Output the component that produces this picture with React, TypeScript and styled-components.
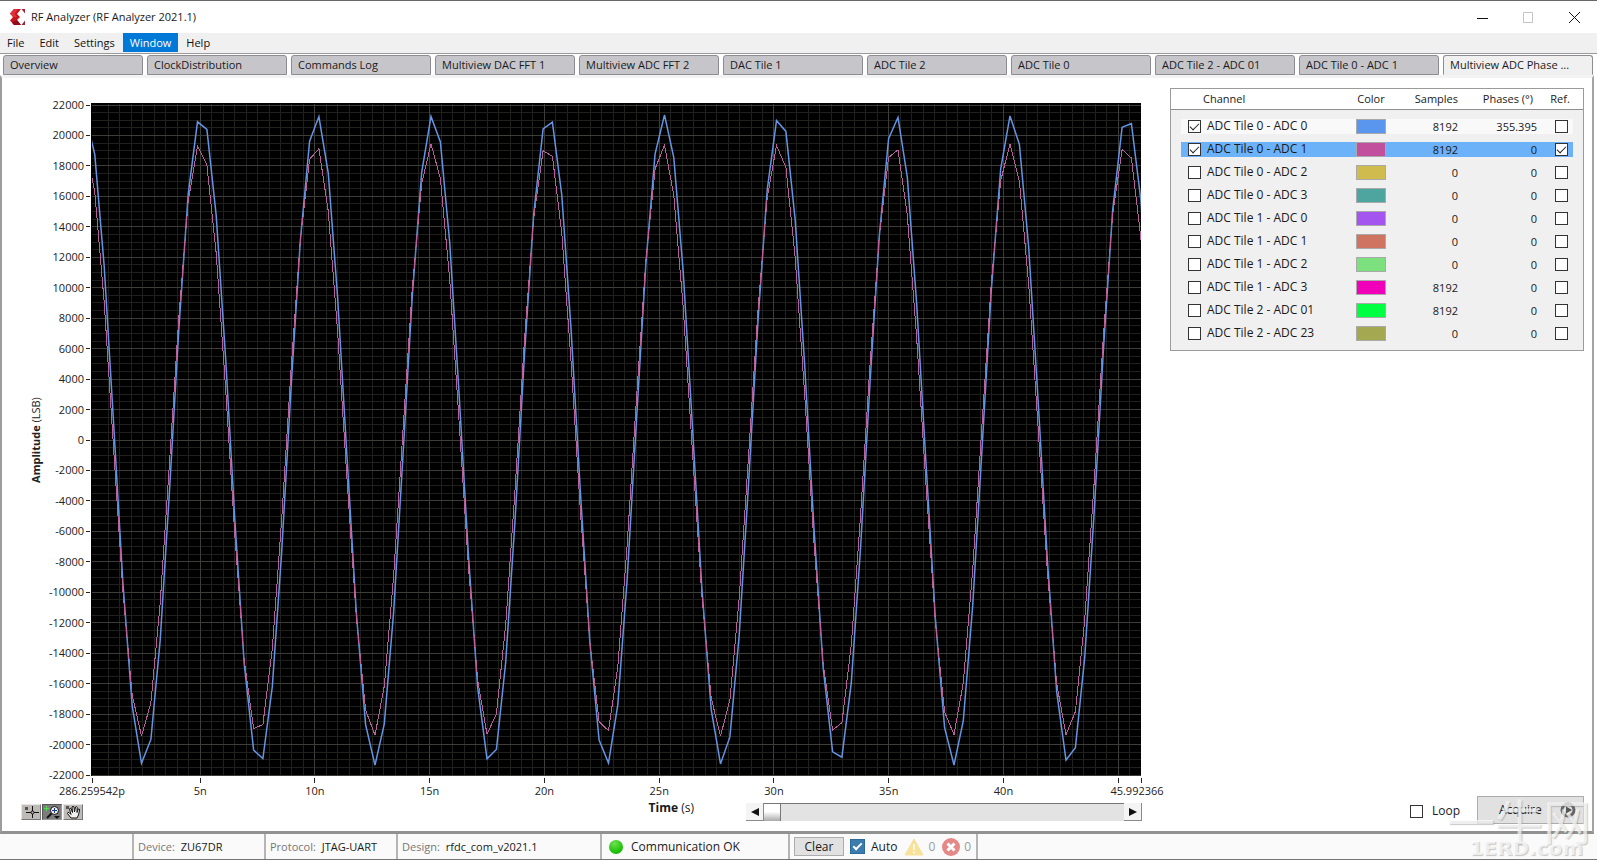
import React, { useLayoutEffect, useRef, useState } from "react";
import styled, { createGlobalStyle } from "styled-components";

const GlobalStyle = createGlobalStyle`
  *, *::before, *::after { box-sizing: border-box; }
  body {
    margin: 0;
    background: #fff;
    color: #1a1a1a;
    font: 11px/16px "Open Sans", "Noto Sans", sans-serif;
  }
  button, input { font: inherit; color: inherit; margin: 0; }
`;

const Frame = styled.div`
  position: relative;
  display: flex;
  flex-direction: column;
  height: 100vh;
  min-height: 560px;
  border-top: 1px solid #6b6769;
  border-bottom: 1px solid #767676;
  overflow: hidden;
`;

/* ---------- title bar ---------- */

const TitleBar = styled.header`
  display: flex;
  align-items: center;
  flex: none;
  height: 32px;
  padding-left: 10px;
`;

const Title = styled.h1`
  flex: 1;
  margin: 0 0 0 6px;
  font-size: 11px;
  font-weight: 400;
`;

const WindowButton = styled.button`
  display: grid;
  place-items: center;
  width: 46px;
  height: 30px;
  padding: 0;
  border: 0;
  background: none;
`;

/* ---------- menu ---------- */

const MenuBar = styled.nav`
  display: flex;
  flex: none;
  gap: 1px;
  height: 21px;
  padding-bottom: 1px;
  background: #f0f0f0;
  border-bottom: 1px solid #9a9a9e;
`;

const MenuItem = styled.button<{ $open?: boolean }>`
  padding: 0 7px;
  border: 0;
  background: ${(p) => (p.$open ? "#0078d7" : "transparent")};
  color: ${(p) => (p.$open ? "#fff" : "#111")};
`;

/* ---------- tabs ---------- */

const TabStrip = styled.div`
  display: grid;
  grid-template-columns: repeat(10, 140fr) 150fr;
  flex: none;
  gap: 4px;
  height: 21px;
  padding: 1px 4px 0 3px;
`;

const Tab = styled.button<{ $active?: boolean }>`
  min-width: 0;
  padding: 0 6px;
  overflow: hidden;
  border: 1px solid #8d8c91;
  border-bottom-color: ${(p) => (p.$active ? "#f0f0f0" : "#8d8c91")};
  border-radius: 3px 3px 0 0;
  background: ${(p) => (p.$active ? "#f0f0f0" : "#c6c5ca")};
  text-align: left;
  white-space: nowrap;
`;

/* ---------- page ---------- */

const Page = styled.main`
  display: flex;
  flex: 1;
  min-height: 0;
  margin-right: 3px;
  border-top: 3px solid #f3f3f3;
  border-left: 2px solid #9c9c9c;
  border-right: 2px solid #a4a4a4;
  border-bottom: 3px solid #8f928f;
`;

const ChartColumn = styled.section`
  display: flex;
  flex: 1;
  flex-direction: column;
  min-width: 0;
`;

const PlotArea = styled.div`
  flex: 1;
  min-height: 0;
  overflow: hidden;

  svg { display: block; }
`;

const ChartFooter = styled.div`
  display: flex;
  align-items: center;
  flex: none;
  height: 30px;
  padding: 0 28px 8px 19px;
`;

const ToolPalette = styled.div`
  display: flex;
  gap: 1px;
  margin-right: auto;
`;

const ToolButton = styled.button<{ $pressed?: boolean }>`
  display: grid;
  place-items: center;
  width: 20px;
  height: 16px;
  padding: 0;
  border: 1px solid;
  border-color: ${(p) => (p.$pressed ? "#555 #999 #999 #555" : "#e6e6e6 #777 #777 #e6e6e6")};
  background: ${(p) => (p.$pressed ? "#7c7c7c" : "#bdbab8")};
`;

const AxisTitle = styled.div`
  margin-right: 52px;
  padding-bottom: 8px;
  font-size: 12px;
`;

const Scroller = styled.div`
  display: flex;
  flex: 0 1 396px;
  height: 18px;
`;

const ScrollArrow = styled.button`
  display: grid;
  place-items: center;
  width: 18px;
  height: 18px;
  padding: 0;
  border: 0;
  border-right: 1px solid #8a8a8a;
  border-bottom: 1px solid #8a8a8a;
  background: #f4f4f4;
`;

const ScrollRange = styled.input`
  appearance: none;
  flex: 1;
  min-width: 0;
  height: 18px;
  border-top: 1px solid #777;
  background: #e3e3e3;

  &::-webkit-slider-thumb {
    appearance: none;
    width: 17px;
    height: 17px;
    border-right: 1px solid #777;
    background: linear-gradient(#fff 45%, #aaa);
  }
`;

const SideColumn = styled.aside`
  display: flex;
  flex: none;
  flex-direction: column;
  justify-content: space-between;
  width: 422px;
  padding: 10px 8px 7px 0;
`;

/* ---------- channel table ---------- */

const TablePanel = styled.div`
  padding-bottom: 5px;
  border: 1px solid #9b9b9b;
  background: #f0f0f0;
`;

const ChannelTable = styled.table`
  width: 100%;
  table-layout: fixed;
  border-collapse: collapse;

  tbody::before {
    content: "";
    display: block;
    height: 5px;
  }
`;

const HeadCell = styled.th<{ $width?: number; $align?: string; $inset?: number }>`
  width: ${(p) => (p.$width ? p.$width + "px" : "auto")};
  height: 20px;
  padding: 0 ${(p) => (p.$align === "right" ? p.$inset ?? 0 : 0)}px 0
    ${(p) => (p.$align === "left" ? p.$inset ?? 0 : 0)}px;
  border-bottom: 1px solid #8f8f8f;
  background: #fff;
  font-weight: 400;
  text-align: ${(p) => p.$align ?? "center"};
`;

const rowTint = { selected: "#6cb2f8", first: "#f9f9f9", plain: "transparent" };

const ChannelRow = styled.tr<{ $tint: keyof typeof rowTint }>`
  height: 23px;
  background: linear-gradient(${(p) => rowTint[p.$tint]}, ${(p) => rowTint[p.$tint]}) center /
    calc(100% - 20px) 15px no-repeat;
`;

const Cell = styled.td<{ $align?: string }>`
  height: 23px;
  padding: 0;
  text-align: ${(p) => p.$align ?? "center"};
`;

const NumberCell = styled(Cell)`
  padding-top: 2px;
  text-align: right;
`;

const ChannelLabel = styled.label`
  display: flex;
  align-items: center;
  gap: 6px;
  padding-left: 17px;
  font-size: 12px;
`;

const Checkbox = styled.input`
  appearance: none;
  display: block;
  flex: none;
  width: 13px;
  height: 13px;
  border: 1px solid #333;
  background: #fff;

  &:checked::after {
    content: "";
    display: block;
    width: 9px;
    height: 5px;
    margin: 2px 0 0 1px;
    border-left: 1px solid #222;
    border-bottom: 1px solid #222;
    transform: rotate(-45deg);
  }
`;

const RefCheckbox = styled(Checkbox)`
  margin: 0 auto 0 18px;
`;

const Swatch = styled.span<{ $color: string }>`
  display: block;
  width: 30px;
  height: 15px;
  margin: 0 auto;
  border: 1px solid #a9a9a9;
  background: ${(p) => p.$color};
`;

/* ---------- acquire ---------- */

const AcquireRow = styled.div`
  display: flex;
  align-items: center;
  justify-content: flex-end;
  gap: 17px;
`;

const LoopLabel = styled.label`
  display: flex;
  align-items: center;
  gap: 9px;
  padding-top: 2px;
  font-size: 12px;
`;

const AcquireButton = styled.button`
  display: flex;
  align-items: center;
  justify-content: space-between;
  width: 107px;
  height: 28px;
  padding: 0 7px 0 21px;
  border: 1px solid #adadad;
  background: #e1e1e1;
  font-size: 12px;
`;

/* ---------- status bar ---------- */

const StatusBar = styled.footer`
  display: flex;
  flex: none;
  height: 25px;
  background: #fafafa;
  font-size: 12px;
`;

const StatusCell = styled.div<{ $width: number }>`
  display: flex;
  align-items: center;
  gap: 6px;
  width: ${(p) => p.$width}px;
  padding-left: 4px;
  border-right: 2px solid #b5b5b5;
  white-space: nowrap;
`;

const StatusField = styled(StatusCell)`
  font-size: 11px;
`;

const FieldName = styled.span`
  color: #777;
`;

const LinkLed = styled.span`
  width: 14px;
  height: 14px;
  margin: 0 2px 0 3px;
  border-radius: 50%;
  background: radial-gradient(circle at 40% 25%, #6fe04e, #22c40e 60%, #17a408);
`;

const ClearButton = styled.button`
  width: 50px;
  height: 19px;
  padding: 0;
  border: 1px solid #adadad;
  background: #e1e1e1;
`;

const AutoLabel = styled.label`
  display: flex;
  align-items: center;
  gap: 6px;
`;

const AutoCheckbox = styled(Checkbox)`
  width: 15px;
  height: 15px;
  border-color: #2d6a98;
  background: #3a7cae;

  &:checked::after {
    margin: 3px 0 0 2px;
    border-width: 0 0 2px 2px;
    border-color: #fff;
  }
`;

const Counter = styled.span`
  display: flex;
  align-items: center;
  gap: 4px;
  padding-left: 1px;
  color: #9a9a9a;
`;

/* ---------- site mark ---------- */

const SiteMark = styled.div`
  position: absolute;
  right: 6px;
  bottom: 0;
  display: flex;
  flex-direction: column;
  align-items: flex-end;
  color: rgba(255, 255, 255, 0.7);
  pointer-events: none;
`;

const SiteName = styled.span`
  font: 400 48px/36px "Noto Sans CJK SC", sans-serif;
  text-shadow: 1px 1px 1px rgba(120, 120, 120, 0.4);
`;

const SiteAddress = styled.span`
  padding-right: 8px;
  font: 700 20px/22px "DejaVu Sans", sans-serif;
  text-shadow: 1px 1px 1px rgba(120, 120, 120, 0.4);
`;

/* ---------- data ---------- */

const tabs = [
  "Overview", "ClockDistribution", "Commands Log", "Multiview DAC FFT 1", "Multiview ADC FFT 2",
  "DAC Tile 1", "ADC Tile 2", "ADC Tile 0", "ADC Tile 2 - ADC 01", "ADC Tile 0 - ADC 1",
  "Multiview ADC Phase ...",
];

const channels = [
  { name: "ADC Tile 0 - ADC 0", color: "#5a96ee", samples: 8192, phase: "355.395", on: true },
  { name: "ADC Tile 0 - ADC 1", color: "#c24f9e", samples: 8192, phase: "0", on: true, ref: true },
  { name: "ADC Tile 0 - ADC 2", color: "#cfbb4e", samples: 0, phase: "0" },
  { name: "ADC Tile 0 - ADC 3", color: "#4ea5a0", samples: 0, phase: "0" },
  { name: "ADC Tile 1 - ADC 0", color: "#a555ef", samples: 0, phase: "0" },
  { name: "ADC Tile 1 - ADC 1", color: "#cf7461", samples: 0, phase: "0" },
  { name: "ADC Tile 1 - ADC 2", color: "#7be07d", samples: 0, phase: "0" },
  { name: "ADC Tile 1 - ADC 3", color: "#f000b8", samples: 8192, phase: "0" },
  { name: "ADC Tile 2 - ADC 01", color: "#00ff40", samples: 8192, phase: "0" },
  { name: "ADC Tile 2 - ADC 23", color: "#a3a851", samples: 0, phase: "0" },
];

/* ---------- chart ---------- */

const T_START = 0.286259542;
const T_END = 45.992366;
const LIMIT = 22000;
const SAMPLE_NS = 0.4069;
const STEP_DEG = 29.05;
const ORIGIN_NS = 4.885;

const margin = { top: 26, right: 29, bottom: 25, left: 90 };

function range(from: number, to: number, step: number) {
  const out: number[] = [];
  for (let v = from; v <= to; v += step) out.push(v);
  return out;
}

function Chart() {
  const host = useRef<HTMLDivElement>(null);
  const [size, setSize] = useState({ w: 1100, h: 700 });

  useLayoutEffect(() => {
    const el = host.current!;
    const measure = () => setSize({ w: el.clientWidth, h: el.clientHeight });
    measure();
    const observer = new ResizeObserver(measure);
    observer.observe(el);
    return () => observer.disconnect();
  }, []);

  const left = margin.left;
  const right = size.w - margin.right;
  const top = margin.top;
  const bottom = size.h - margin.bottom;
  const x = (ns: number) => left + ((ns - T_START) / (T_END - T_START)) * (right - left);
  const y = (v: number) => top + 1 + ((LIMIT - v) / (2 * LIMIT)) * (bottom - top - 2);

  const wave = (amplitude: number, phase: number) =>
    range(-12, 102, 1)
      .map((k) => {
        const v = amplitude * Math.cos(((phase + k * STEP_DEG) * Math.PI) / 180);
        return `${x(ORIGIN_NS + k * SAMPLE_NS).toFixed(1)},${y(v).toFixed(1)}`;
      })
      .join(" ");

  const minorX = range(1, 45.5, 0.5).filter((t) => t % 5 !== 0);
  const majorX = range(5, 45, 5);
  const minorY = range(-21500, 21500, 500).filter((v) => v % 2000 !== 0);
  const majorY = range(-22000, 22000, 2000);
  const middle = (top + bottom) / 2;

  return (
    <PlotArea ref={host}>
      <svg width={size.w} height={size.h} role="img" aria-label="Amplitude over time" fill="#222">
        <clipPath id="plot"><rect x={left} y={top} width={right - left} height={bottom - top} /></clipPath>
        <rect x={left - 1} y={top - 1} width={right - left + 1} height={bottom - top + 1} fill="#000" />
        <g clipPath="url(#plot)" shapeRendering="crispEdges">
          <g stroke="#20201c">
            {minorX.map((t) => <line key={t} x1={x(t)} x2={x(t)} y1={top} y2={bottom} />)}
            {minorY.map((v) => <line key={v} x1={left} x2={right} y1={y(v)} y2={y(v)} />)}
          </g>
          <g stroke="#3e3e38">
            {majorX.map((t) => <line key={t} x1={x(t)} x2={x(t)} y1={top} y2={bottom} />)}
            {majorY.map((v) => <line key={v} x1={left} x2={right} y1={y(v)} y2={y(v)} />)}
          </g>
        </g>
        <g clipPath="url(#plot)" fill="none">
          <polyline points={wave(21350, -11.8)} stroke="#6494e4" strokeWidth="1.5" />
          <polyline points={wave(19450, -7.2)} stroke="#b8609c" shapeRendering="crispEdges" />
        </g>
        <g stroke="#222" shapeRendering="crispEdges">
          {majorY.map((v) => <line key={v} x1={left - 6} x2={left - 2} y1={y(v)} y2={y(v)} />)}
          {[T_START, ...majorX, T_END].map((t) => <line key={t} x1={x(t)} x2={x(t)} y1={bottom + 2} y2={bottom + 7} />)}
        </g>
        <g fontSize="11" textAnchor="end">
          {majorY.map((v) => <text key={v} x={left - 8} y={y(v) + 4}>{v}</text>)}
        </g>
        <g fontSize="11" textAnchor="middle">
          <text x={left} y={bottom + 19}>286.259542p</text>
          {majorX.filter((t) => t < 45).map((t) => <text key={t} x={x(t)} y={bottom + 19}>{t}n</text>)}
          <text x={right - 4} y={bottom + 19}>45.992366</text>
          <text transform={`translate(38 ${middle}) rotate(-90)`}>
            <tspan fontWeight="700">Amplitude</tspan> (LSB)
          </text>
        </g>
      </svg>
    </PlotArea>
  );
}

/* ---------- icons ---------- */

const Logo = () => (
  <svg width="15" height="16" viewBox="0 0 15 16" aria-hidden="true">
    <path d="M4 0H11L7 5L10 8L7 11L11 16H4L0 11.500L3 8L0 4.500Z" fill="#c8141c" />
    <path d="M4 0H8L4.500 5L7 8H3L0 4.500Z" fill="#e0323a" />
    <path d="M7 11L11 16H4L2 13.700Z" fill="#8e0e1c" />
    <path d="M11.500 0H15V4.500ZM15 11.500V16H11.500Z" fill="#a02038" />
  </svg>
);

const Crosshair = () => (
  <svg width="16" height="14" viewBox="0 0 16 14" fill="none" stroke="#111" aria-hidden="true">
    <path d="M9.500 1V13M3 7.500H16" />
    <circle cx="9.500" cy="7.500" r="1.500" fill="#bdbab8" />
    <rect x="2" y="2" width="3" height="3" fill="#555" stroke="none" />
  </svg>
);

const Magnifier = () => (
  <svg width="18" height="14" viewBox="0 0 18 14" fill="none" stroke="#111" aria-hidden="true">
    <path d="M3.500 1V6M1 3.500H6" stroke="#4ee04e" />
    <path d="M8.500 8.500L4 13" strokeWidth="2" />
    <circle cx="11.500" cy="5.500" r="4" fill="#eee" />
    <path d="M11.500 3V8M9 5.500H14" stroke="#223a9a" />
    <path d="M11 11H17L14 14Z" fill="#111" stroke="none" />
  </svg>
);

const Hand = () => (
  <svg width="16" height="14" viewBox="0 0 16 14" fill="none" stroke="#111" aria-hidden="true">
    <path d="M6 13L2.500 8.500Q2.500 7 4 7.500L6 9.500L4.500 4Q5 2.500 6.200 3.800L7.500 7.500L7 2Q8 0.500 9 2L9.500 7L10.500 2Q11.500 1 12.200 2.300L12 7.500L13.200 4Q14.500 3.500 14.600 5L13.500 10L12 13Z" fill="#f2f2f2" />
    <rect x="1" y="1" width="3" height="3" fill="#555" stroke="none" />
  </svg>
);

const PlayRing = () => (
  <svg width="16" height="16" viewBox="0 0 16 16" aria-hidden="true">
    <circle cx="8" cy="8" r="6" fill="none" stroke="#666" strokeWidth="3" />
    <path d="M6 4.500L12 8L6 11.500Z" fill="#555" />
  </svg>
);

const Arrow = ({ d }: { d: string }) => (
  <svg width="8" height="8" viewBox="0 0 8 8" aria-hidden="true"><path d={d} fill="#111" /></svg>
);

/* ---------- application ---------- */

export default function App() {
  return (
    <Frame>
      <GlobalStyle />
      <TitleBar>
        <Logo />
        <Title>RF Analyzer (RF Analyzer 2021.1)</Title>
        <WindowButton aria-label="Minimize">
          <svg width="11" height="11" stroke="#111"><path d="M0 6.500H11" /></svg>
        </WindowButton>
        <WindowButton aria-label="Maximize" disabled>
          <svg width="11" height="11" fill="none" stroke="#c4c4c4"><path d="M.5 .5H9.500V10.500H.5Z" /></svg>
        </WindowButton>
        <WindowButton aria-label="Close">
          <svg width="11" height="11" stroke="#111"><path d="M0 0L11 11M11 0L0 11" /></svg>
        </WindowButton>
      </TitleBar>

      <MenuBar>
        {["File", "Edit", "Settings", "Window", "Help"].map((m) => (
          <MenuItem key={m} $open={m === "Window"}>{m}</MenuItem>
        ))}
      </MenuBar>

      <TabStrip role="tablist">
        {tabs.map((t, i) => (
          <Tab key={t} role="tab" aria-selected={i === 10} $active={i === 10}>{t}</Tab>
        ))}
      </TabStrip>

      <Page>
        <ChartColumn>
          <Chart />
          <ChartFooter>
            <ToolPalette>
              <ToolButton aria-label="Cursor"><Crosshair /></ToolButton>
              <ToolButton aria-label="Zoom" $pressed><Magnifier /></ToolButton>
              <ToolButton aria-label="Pan"><Hand /></ToolButton>
            </ToolPalette>
            <AxisTitle><b>Time</b> (s)</AxisTitle>
            <Scroller>
              <ScrollArrow aria-label="Scroll left"><Arrow d="M8 0V8L0 4Z" /></ScrollArrow>
              <ScrollRange type="range" min={0} max={100} defaultValue={0} aria-label="Time position" />
              <ScrollArrow aria-label="Scroll right"><Arrow d="M0 0V8L8 4Z" /></ScrollArrow>
            </Scroller>
          </ChartFooter>
        </ChartColumn>

        <SideColumn>
          <TablePanel>
            <ChannelTable>
              <thead>
                <tr>
                  <HeadCell $align="left" $inset={32}>Channel</HeadCell>
                  <HeadCell $width={60}>Color</HeadCell>
                  <HeadCell $width={57} $align="right">Samples</HeadCell>
                  <HeadCell $width={79} $align="right" $inset={4}>Phases (°)</HeadCell>
                  <HeadCell $width={46}>Ref.</HeadCell>
                </tr>
              </thead>
              <tbody>
                {channels.map((c, i) => (
                  <ChannelRow key={c.name} $tint={i === 1 ? "selected" : i === 0 ? "first" : "plain"}>
                    <Cell $align="left">
                      <ChannelLabel>
                        <Checkbox type="checkbox" defaultChecked={c.on} />
                        {c.name}
                      </ChannelLabel>
                    </Cell>
                    <Cell><Swatch $color={c.color} /></Cell>
                    <NumberCell>{c.samples}</NumberCell>
                    <NumberCell>{c.phase}</NumberCell>
                    <Cell>
                      <RefCheckbox type="checkbox" defaultChecked={c.ref} aria-label={`${c.name} reference`} />
                    </Cell>
                  </ChannelRow>
                ))}
              </tbody>
            </ChannelTable>
          </TablePanel>

          <AcquireRow>
            <LoopLabel><Checkbox type="checkbox" />Loop</LoopLabel>
            <AcquireButton>Acquire<PlayRing /></AcquireButton>
          </AcquireRow>
        </SideColumn>
      </Page>

      <StatusBar>
        <StatusField $width={134} />
        <StatusField $width={132}><FieldName>Device:</FieldName>ZU67DR</StatusField>
        <StatusField $width={132}><FieldName>Protocol:</FieldName>JTAG-UART</StatusField>
        <StatusField $width={204}><FieldName>Design:</FieldName>rfdc_com_v2021.1</StatusField>
        <StatusCell $width={188}><LinkLed />Communication OK</StatusCell>
        <StatusCell $width={188}>
          <ClearButton>Clear</ClearButton>
          <AutoLabel><AutoCheckbox type="checkbox" defaultChecked />Auto</AutoLabel>
          <Counter>
            <svg width="20" height="18" viewBox="0 0 20 18" aria-label="Warnings">
              <path d="M10 1L19 17H1Z" fill="#f8e29a" stroke="#f8e29a" strokeLinejoin="round" />
              <path d="M10 6V12M10 13.500V15.500" stroke="#fff8dc" strokeWidth="2" />
            </svg>
            0
          </Counter>
          <Counter>
            <svg width="18" height="18" viewBox="0 0 18 18" aria-label="Errors">
              <circle cx="9" cy="9" r="9" fill="#e48888" />
              <path d="M5.500 5.500L12.500 12.500M12.500 5.500L5.500 12.500" stroke="#fff" strokeWidth="3" />
            </svg>
            0
          </Counter>
        </StatusCell>
      </StatusBar>

      <SiteMark>
        <SiteName>一牛网</SiteName>
        <SiteAddress>1ERD.com</SiteAddress>
      </SiteMark>
    </Frame>
  );
}
